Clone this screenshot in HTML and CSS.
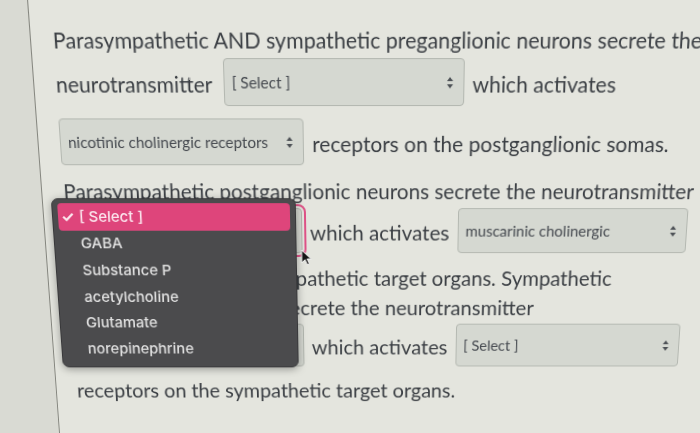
FILE: index.html
```html
<!DOCTYPE html>
<html lang="en">
<head>
    <meta charset="UTF-8">
    <meta name="viewport" content="width=device-width, initial-scale=1.0">
    <title>Quiz question</title>
    <link rel="stylesheet" href="styles.css">
</head>
<body>
    <div class="page">
        <div class="frame">
            <p class="question">Parasympathetic AND sympathetic preganglionic neurons secrete the<br>neurotransmitter <span class="select first"><span class="val">[ Select ]</span><svg class="arrows" width="6" height="11" viewBox="0 0 6 11"><path d="M3 0L6 4H0Z M3 11L0 7H6Z"/></svg></span> which activates<br><span class="select start wide"><span class="val">nicotinic cholinergic receptors</span><svg class="arrows" width="6" height="11" viewBox="0 0 6 11"><path d="M3 0L6 4H0Z M3 11L0 7H6Z"/></svg></span> receptors on the postganglionic somas.<br>Parasympathetic postganglionic neurons secrete the neurotransmitter<br><span class="select start focused"><span class="val">[ Select ]</span><svg class="arrows" width="6" height="11" viewBox="0 0 6 11"><path d="M3 0L6 4H0Z M3 11L0 7H6Z"/></svg>
                    <!-- lista aberta do select -->
                    <span class="menu">
                        <span class="item active"><span class="check">✓</span>[ Select ]</span>
                        <span class="item"><span class="check"></span>GABA</span>
                        <span class="item"><span class="check"></span>Substance P</span>
                        <span class="item"><span class="check"></span>acetylcholine</span>
                        <span class="item"><span class="check"></span>Glutamate</span>
                        <span class="item"><span class="check"></span>norepinephrine</span>
                    </span>
                    <svg class="cursor" width="11" height="17" viewBox="0 0 11 17"><path d="M1 1V14L4.3 10.8L6.6 16L8.6 15.1L6.4 10H10.5Z" fill="#151515" stroke="#f2f2f2" stroke-width="1"/></svg>
                </span> which activates <span class="select narrow"><span class="val">muscarinic cholinergic</span><svg class="arrows" width="6" height="11" viewBox="0 0 6 11"><path d="M3 0L6 4H0Z M3 11L0 7H6Z"/></svg></span><br>receptors on the parasympathetic target organs. Sympathetic<br>postganglionic neurons secrete the neurotransmitter<br><span class="select start"><span class="val">[ Select ]</span><svg class="arrows" width="6" height="11" viewBox="0 0 6 11"><path d="M3 0L6 4H0Z M3 11L0 7H6Z"/></svg></span> which activates <span class="select narrow"><span class="val">[ Select ]</span><svg class="arrows" width="6" height="11" viewBox="0 0 6 11"><path d="M3 0L6 4H0Z M3 11L0 7H6Z"/></svg></span><br>receptors on the sympathetic target organs.</p>
        </div>
    </div>
</body>
</html>
```

FILE: styles.css
```css
html, body {
    margin: 0;
    height: 433px;
    overflow: hidden;
    background-color: #e3e4dd;
}
body {
    font-family: Lato, "Liberation Sans", sans-serif;
}
/* a foto da tela foi tirada meio de cima, por isso a perspectiva */
.page {
    height: 480px;
    margin: 0 -60px;
    padding: 0 60px;
    background-color: #d9dad3;
    transform-origin: 438px 216px;
    transform: perspective(800px) rotateX(-10deg);
}
.frame {
    height: 100%;
    margin: 0 -60px 0 43px;
    padding: 29px 0 0 21px;
    border-left: 1px solid #85867f;
    background-color: #e4e5de;
}
.question {
    margin: 0;
    font-size: 20.6px;
    line-height: 31px;
    color: #3b3f44;
    white-space: nowrap;
}
.select {
    display: inline-flex;
    align-items: center;
    justify-content: space-between;
    vertical-align: middle;
    box-sizing: border-box;
    width: 237px;
    height: 46px;
    margin: 1px 3px 11px;
    padding: 0 10px 0 7px;
    background-color: #d5d8d1;
    border: 1px solid #b4b8b1;
    border-radius: 4px;
    font-size: 15px;
    line-height: 18px;
    color: #464a50;
}
.select.first {
    width: 234px;
    margin-left: 6px;
}
.select.start {
    margin-left: 0;
}
.select.wide {
    width: 240px;
}
.select.narrow {
    width: 230px;
}
.arrows {
    fill: #4d5156;
}
.focused {
    position: relative;
    z-index: 1;
    outline: 2px solid #de5287;
    outline-offset: 2px;
}
.menu {
    position: absolute;
    top: -11px;
    left: -14px;
    width: 244px;
    box-sizing: border-box;
    padding: 4px 5px 5px;
    background-color: #4b4b4d;
    border: 1px solid #38383a;
    border-radius: 7px;
    box-shadow: 0 2px 8px rgba(0, 0, 0, 0.35);
    font-family: Inter, "Liberation Sans", sans-serif;
    font-size: 15px;
    font-weight: 500;
    color: #e2e2e2;
}
.item {
    display: flex;
    align-items: center;
    height: 27.6px;
    border-radius: 4px;
}
.item.active {
    background-color: #de457b;
    color: #fbe6ee;
}
.check {
    display: inline-block;
    width: 18px;
    padding-left: 3px;
    font-weight: 700;
}
.cursor {
    position: absolute;
    left: 234px;
    top: 41px;
}
```
